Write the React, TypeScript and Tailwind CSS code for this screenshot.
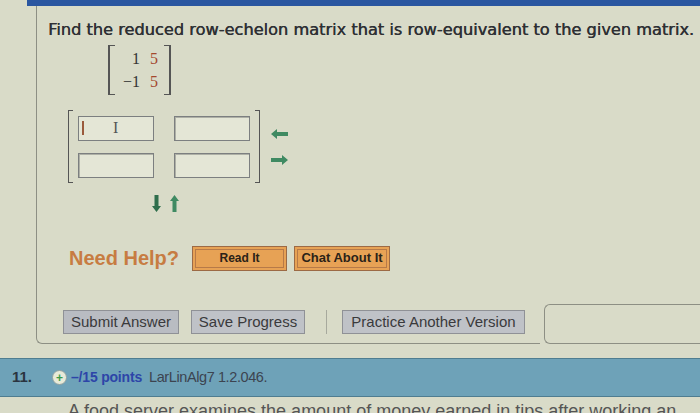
import React from "react";

const sans = { fontFamily: '"Liberation Sans", Arial, sans-serif' };

function ArrowH({ dir }: { dir: "left" | "right" }) {
  return (
    <svg width="17" height="10" viewBox="0 0 17 10">
      {dir === "left" ? (
        <path d="M0 5 L6 0 L6 3 L17 3 L17 7 L6 7 L6 10 Z" fill="#3f8a62" />
      ) : (
        <path d="M17 5 L11 0 L11 3 L0 3 L0 7 L11 7 L11 10 Z" fill="#3f8a62" />
      )}
    </svg>
  );
}

function ArrowV({ dir }: { dir: "up" | "down" }) {
  return (
    <svg width="9" height="17" viewBox="0 0 9 17">
      {dir === "down" ? (
        <path d="M4.5 17 L0 11 L2.5 11 L2.5 0 L6.5 0 L6.5 11 L9 11 Z" fill="#2f6e4c" />
      ) : (
        <path d="M4.5 0 L0 6 L2.5 6 L2.5 17 L6.5 17 L6.5 6 L9 6 Z" fill="#3f8a62" />
      )}
    </svg>
  );
}

function Cell() {
  return <div className="w-[76px] h-[25px] border border-[#7c7f80] bg-[#e4e6d6] shadow-[inset_1px_1px_0_#aeb0a6]" />;
}

export default function App() {
  return (
    <div className="w-[700px] h-[413px] overflow-hidden bg-[#d9dbc8] flex flex-col" style={sans}>
      {/* top strip */}
      <div className="shrink-0 h-[6px] bg-[#2a56a0] ml-[27px]" />

      {/* question box */}
      <div className="shrink-0 ml-[36px] mr-[160px] h-[338px] border-l border-b border-[#8d8f84] rounded-bl-md relative">
        <div
          className="pl-[11px] pt-[14px] text-[16.2px] leading-[20px] text-[#2e3034] whitespace-nowrap [text-shadow:0.4px_0_0_#2e3034]"
          style={{ fontFamily: '"DejaVu Sans", Verdana, sans-serif' }}
        >
          Find the reduced row-echelon matrix that is row-equivalent to the given matrix.
        </div>

        {/* given matrix */}
        <div className="ml-[71px] mt-[5px] flex items-stretch h-[50px]" style={{ fontFamily: '"Liberation Serif", serif' }}>
          <div className="w-[7px] border-l-2 border-t border-b border-[#555]" />
          <div className="grid grid-cols-[auto_auto] gap-x-[10px] content-center gap-y-[5px] pl-[8px] pr-[6px] text-[16px] leading-[18px]">
            <span className="text-right text-[#333]">1</span>
            <span className="text-[#a4482e]">5</span>
            <span className="text-right text-[#333]">−1</span>
            <span className="text-[#a4482e]">5</span>
          </div>
          <div className="w-[7px] border-r-2 border-t border-b border-[#555]" />
        </div>

        {/* answer matrix */}
        <div className="ml-[31px] mt-[15px] flex items-center">
          <div className="flex items-stretch h-[73px]">
            <div className="w-[5px] border-l border-t border-b border-[#555]" />
            <div className="grid grid-cols-[76px_76px] gap-x-[20px] gap-y-[12px] content-center px-[5px]">
              <div className="w-[76px] h-[25px] border border-[#7c7f80] bg-[#e4e6d6] flex items-center pl-[3px]">
                <div className="w-[2px] h-[14px] bg-[#9a5a3c]" />
                <span className="ml-[29px] text-[16px] text-[#555] leading-none" style={{ fontFamily: '"Liberation Serif", serif' }}>I</span>
              </div>
              <Cell />
              <Cell />
              <Cell />
            </div>
            <div className="w-[5px] border-r border-t border-b border-[#555]" />
          </div>
          <div className="ml-[11px] flex flex-col gap-[16px]">
            <ArrowH dir="left" />
            <ArrowH dir="right" />
          </div>
        </div>

        <div className="ml-[115px] mt-[12px] flex gap-[9px]">
          <ArrowV dir="down" />
          <ArrowV dir="up" />
        </div>

        {/* need help */}
        <div className="ml-[32px] mt-[31px] flex items-center">
          <span className="text-[20px] font-bold text-[#c77c42]">Need Help?</span>
          <button className="ml-[13px] w-[95px] h-[25px] bg-[#e7a255] border border-[#9c6a45] p-[2px]">
            <span className="flex h-full items-center justify-center border border-[#b77a48] text-[12px] font-bold text-[#2b2218]">
              Read It
            </span>
          </button>
          <button className="ml-[7px] w-[96px] h-[25px] bg-[#e7a255] border border-[#9c6a45] p-[2px]">
            <span className="flex h-full items-center justify-center border border-[#b77a48] text-[13px] font-bold text-[#2b2218]">
              Chat About It
            </span>
          </button>
        </div>

        {/* submit row */}
        <div className="ml-[26px] mt-[37px] flex items-center">
          <button className="h-[24px] w-[116px] bg-[#b9bcc2] border border-[#8f9196] text-[15px] text-[#3a3a3c]">
            Submit Answer
          </button>
          <button className="ml-[12px] h-[24px] w-[114px] bg-[#bfc2c7] border border-[#8f9196] text-[15px] text-[#3a3a3c]">
            Save Progress
          </button>
          <div className="ml-[21px] w-px h-[24px] bg-[#a7a99d]" />
          <button className="ml-[15px] h-[24px] w-[183px] bg-[#bfc2c7] border border-[#8f9196] text-[15px] text-[#3a3a3c]">
            Practice Another Version
          </button>
        </div>

        <div className="absolute right-[-161px] bottom-[-1px] w-[157px] h-[40px] border-l border-t border-b border-[#8d8f84] rounded-l-md" />
      </div>

      {/* question 11 bar */}
      <div className="shrink-0 mt-[14px] h-[39px] bg-[#6ea2b8] border-t border-b border-[#4f7d90] flex items-center pl-[12px]">
        <span className="text-[15px] font-bold text-[#2a3440]">11.</span>
        <span className="ml-[20px] w-[15px] h-[15px] rounded-full bg-[#e8ead8] border border-[#8fa0a0] flex items-center justify-center text-[12px] font-bold text-[#3d9a4a] leading-none">
          +
        </span>
        <span className="ml-[4px] text-[14px] font-bold text-[#2d45a8] tracking-[-0.2px]">–/15 points</span>
        <span className="ml-[7px] text-[14.5px] text-[#3c4450] tracking-[-0.4px]">LarLinAlg7 1.2.046.</span>
      </div>

      <div className="shrink-0 ml-[68px] mt-[1px] text-[18px] text-[#555] whitespace-nowrap">
        A food server examines the amount of money earned in tips after working an
      </div>
    </div>
  );
}
